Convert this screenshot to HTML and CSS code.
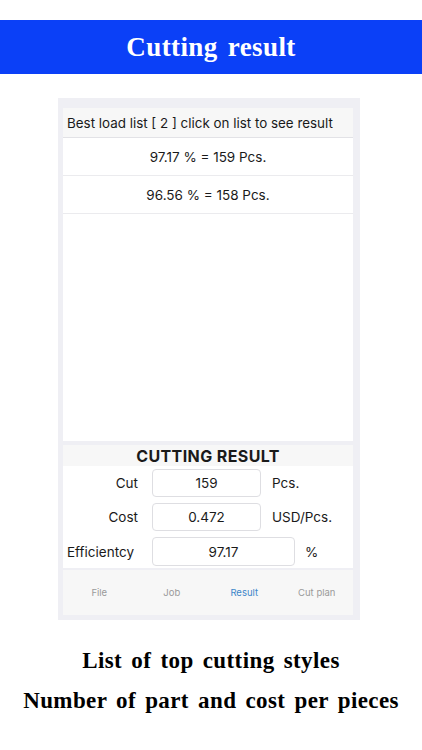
FILE: index.html
```html
<!DOCTYPE html>
<html>
<head>
<meta charset="utf-8">
<link rel="stylesheet" href="styles.css">
</head>
<body>
<div class="page">
  <div class="titlebar">Cutting result</div>
  <div class="frame">
    <div class="screen">
      <div class="listhead">Best load list [ 2 ] click on list to see result</div>
      <div class="listrow">97.17 % = 159 Pcs.</div>
      <div class="listrow">96.56 % = 158 Pcs.</div>
      <div class="listempty"></div>
      <div class="sechead">CUTTING RESULT</div>
      <div class="form">
        <div class="frow">
          <div class="flabel">Cut</div>
          <div class="field">159</div>
          <div class="unit">Pcs.</div>
        </div>
        <div class="frow">
          <div class="flabel">Cost</div>
          <div class="field">0.472</div>
          <div class="unit">USD/Pcs.</div>
        </div>
        <div class="frow">
          <div class="flabel left">Efficientcy</div>
          <div class="field wide">97.17</div>
          <div class="unit pct">%</div>
        </div>
      </div>
      <div class="tabbar">
        <div class="tab">File</div>
        <div class="tab">Job</div>
        <div class="tab active">Result</div>
        <div class="tab">Cut plan</div>
      </div>
    </div>
  </div>
  <div class="caption">
    <div class="cap1">List of top cutting styles</div>
    <div class="cap2">Number of part and cost per pieces</div>
  </div>
</div>
</body>
</html>
```
FILE: styles.css
```css
html, body {
  margin: 0;
  padding: 0;
  background: #ffffff;
}
.page {
  width: 422px;
  height: 750px;
  padding-top: 20px;
  box-sizing: border-box;
}
.titlebar {
  height: 54px;
  background: #0b40f7;
  color: #ffffff;
  font-family: "Liberation Serif", "Times New Roman", serif;
  font-weight: bold;
  font-size: 27px;
  letter-spacing: 0.4px;
  word-spacing: 3px;
  display: flex;
  align-items: center;
  justify-content: center;
}
.frame {
  margin: 24px 0 0 58px;
  width: 302px;
  background: #efeff4;
  padding: 10px 7px 5px 5px;
  box-sizing: border-box;
}
.screen {
  background: #ffffff;
  font-family: Inter, "Noto Sans", sans-serif;
  color: #1a1a1a;
  display: flex;
  flex-direction: column;
}
.listhead {
  height: 30px;
  background: #f7f7f7;
  border-bottom: 1px solid #e2e2e6;
  box-sizing: border-box;
  font-size: 13.4px;
  padding-left: 4px;
  display: flex;
  align-items: center;
  white-space: nowrap;
}
.listrow {
  height: 38px;
  border-bottom: 1px solid #ebebee;
  box-sizing: border-box;
  font-size: 13.5px;
  display: flex;
  align-items: center;
  justify-content: center;
}
.listempty {
  height: 227px;
  border-bottom: 4px solid #efeff4;
}
.sechead {
  height: 21px;
  background: #f7f7f7;
  font-weight: bold;
  font-size: 16px;
  letter-spacing: 0.4px;
  display: flex;
  align-items: center;
  justify-content: center;
}
.form {
  padding: 3px 0 2px 0;
  display: flex;
  flex-direction: column;
  gap: 6px;
  border-bottom: 2px solid #efeff4;
}
.frow {
  display: flex;
  align-items: center;
  height: 28px;
  font-size: 13.5px;
}
.frow:last-child {
  height: 29px;
}
.flabel {
  width: 75px;
  text-align: right;
  margin-right: 14px;
}
.flabel.left {
  text-align: left;
  padding-left: 4px;
  width: 71px;
}
.field {
  width: 109px;
  height: 100%;
  border: 1px solid #dedee2;
  border-radius: 4px;
  box-sizing: border-box;
  display: flex;
  align-items: center;
  justify-content: center;
}
.field.wide {
  width: 143px;
}
.unit {
  margin-left: 11px;
}
.unit.pct {
  margin-left: 10px;
}
.tabbar {
  height: 45px;
  background: #f7f7f7;
  display: grid;
  grid-template-columns: repeat(4, 1fr);
  align-items: center;
}
.tab {
  text-align: center;
  font-size: 9.5px;
  color: #9a9a9a;
}
.tab.active {
  color: #3d86c9;
}
.caption {
  font-family: "Liberation Serif", "Times New Roman", serif;
  font-weight: bold;
  color: #000000;
  text-align: center;
  font-size: 23px;
  word-spacing: 3px;
  letter-spacing: 0.4px;
  margin-top: 27px;
}
.cap1 {
  height: 40px;
  line-height: 28px;
}
.cap2 {
  line-height: 28px;
}
```
